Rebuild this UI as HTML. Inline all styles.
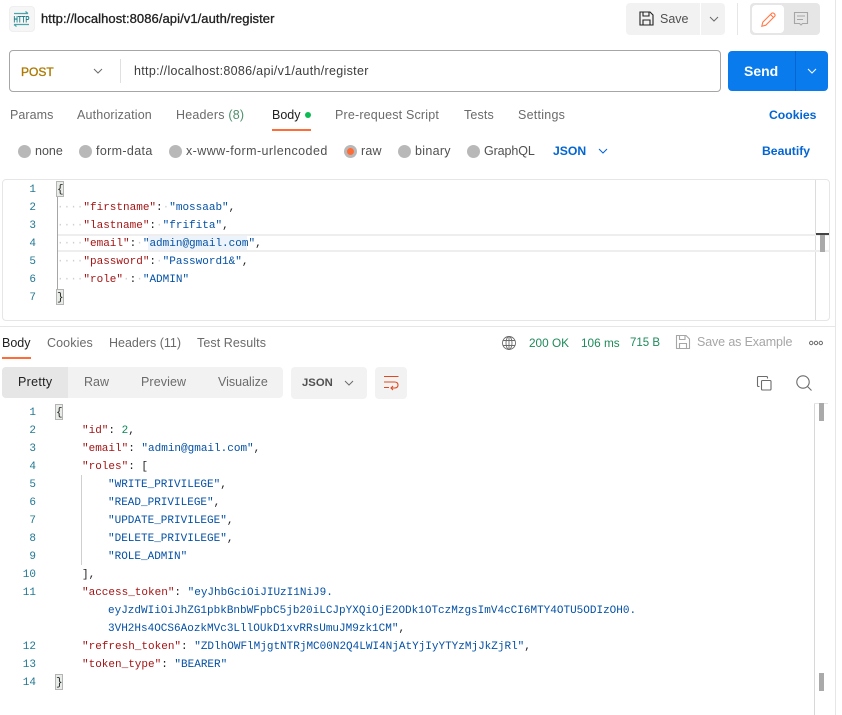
<!DOCTYPE html>
<html><head><meta charset="utf-8"><style>
html,body{margin:0;padding:0;background:#fff}
body{width:842px;height:715px;position:relative;overflow:hidden;font-family:"Liberation Sans",sans-serif;font-size:12.5px;color:#6b6b6b}
.a{position:absolute;white-space:pre}
.t{position:absolute;white-space:pre;line-height:16px;height:16px}
.c{position:absolute;white-space:pre;font-family:"Liberation Mono",monospace;font-size:11px;line-height:18px;height:18px;color:#212121;margin-top:1px}
.n{position:absolute;width:36px;text-align:right;left:0;font-family:"Liberation Mono",monospace;font-size:11px;line-height:18px;height:18px;color:#237893;margin-top:1px}
.k{color:#a31515}.s{color:#0451a5}.g{color:#098658}.d{color:#cfcfcf}
.r{position:absolute;width:13px;height:13px;border-radius:50%;background:#b8b8b8;top:145px}
.b{position:absolute;width:8px;height:16px;border:1px solid #b4b4b4;background:#e8ece6;box-sizing:border-box}
.blue{color:#0265d2;font-weight:bold}
.tab{letter-spacing:.15px}
svg{position:absolute;overflow:visible}
</style></head><body>

<div class="a" style="left:835px;top:0;width:1px;height:715px;background:#e6e6e6"></div>

<div class="a" style="left:9px;top:6px;width:26px;height:26px;background:#f6f6f6;border-radius:4px;box-sizing:border-box;border:1px solid #efefef"></div>
<svg style="left:13px;top:11px" width="18" height="16" viewBox="0 0 18 16"><path d="M1 2.5H15M12.5 .5L15 2.5M1 13.5H16M1 13.5L3.5 15.5" stroke="#4ba3ab" stroke-width="1.2" fill="none"/><text x="0.5" y="11.5" font-family="Liberation Sans" font-size="9" font-weight="bold" fill="#227f8c" textLength="16" lengthAdjust="spacingAndGlyphs">HTTP</text></svg>
<div class="t" style="left:41px;top:11px;color:#212121;font-size:13px;-webkit-text-stroke:.3px #212121;letter-spacing:.07px">http://localhost:8086/api/v1/auth/register</div>

<div class="a" style="left:626px;top:3px;width:74px;height:32px;background:#f2f2f2;border-radius:4px 0 0 4px"></div>
<div class="a" style="left:701px;top:3px;width:24px;height:32px;background:#f2f2f2;border-radius:0 4px 4px 0"></div>
<svg style="left:639px;top:11px" width="15" height="15" viewBox="0 0 15 15" fill="none" stroke="#212121" stroke-width="1.1"><path d="M1 1H11L14 4V14H1Z"/><path d="M4 1V5H10V1M4 14V9H11V14"/></svg>
<div class="t" style="left:660px;top:11px;color:#505050;font-size:12.5px">Save</div>
<svg style="left:709px;top:16px" width="10" height="6" viewBox="0 0 10 6" fill="none" stroke="#6b6b6b"><path d="M1 1L5 5L9 1"/></svg>
<div class="a" style="left:737px;top:3px;width:1px;height:32px;background:#e6e6e6"></div>
<div class="a" style="left:750px;top:3px;width:70px;height:32px;background:#e6e6e6;border-radius:4px"></div>
<div class="a" style="left:752px;top:5px;width:32px;height:28px;background:#fff;border-radius:4px"></div>
<svg style="left:761px;top:12px" width="15" height="15" viewBox="0 0 15 15" fill="none" stroke="#ff7c4d" stroke-width="1.1"><path d="M.8 14.2L1.8 10.2L10.8 1.2Q12 .4 13.3 1.7Q14.6 3 13.8 4.2L4.8 13.2ZM9.5 2.5L12.5 5.5"/></svg>
<svg style="left:794px;top:12px" width="14" height="15" viewBox="0 0 14 15" fill="none" stroke="#a6a6a6" stroke-width="1.1"><path d="M.5 .5H13.5V11.5H8.5L7 13L5.5 11.5H.5ZM3 4H11M3 7.5H9"/></svg>

<div class="a" style="left:9px;top:50px;width:712px;height:42px;border:1px solid #a6a6a6;border-radius:4px;box-sizing:border-box"></div>
<div class="t" style="left:21px;top:64px;color:#ad7a03;font-size:12px;-webkit-text-stroke:.35px #ad7a03">POST</div>
<svg style="left:93px;top:68px" width="10" height="6" viewBox="0 0 10 6" fill="none" stroke="#6b6b6b"><path d="M1 1L5 5L9 1"/></svg>
<div class="a" style="left:120px;top:59px;width:1px;height:24px;background:#e0e0e0"></div>
<div class="t" style="left:134px;top:63px;color:#3d3d3d;font-size:12.5px;letter-spacing:.31px">http://localhost:8086/api/v1/auth/register</div>
<div class="a" style="left:728px;top:51px;width:100px;height:40px;background:#097bed;border-radius:4px"></div>
<div class="a" style="left:795px;top:51px;width:1px;height:40px;background:#0265d2"></div>
<div class="t" style="left:744px;top:63px;color:#fff;font-weight:bold;font-size:14px">Send</div>
<svg style="left:807px;top:68px" width="10" height="6" viewBox="0 0 10 6" fill="none" stroke="#fff"><path d="M1 1L5 5L9 1"/></svg>

<div class="t tab" style="left:10px;top:107px;letter-spacing:.05px">Params</div>
<div class="t tab" style="left:77px;top:107px">Authorization</div>
<div class="t tab" style="left:176px;top:107px;letter-spacing:.2px">Headers <span style="color:#4d8f6a">(8)</span></div>
<div class="t" style="left:272px;top:107px;color:#212121">Body</div>
<div class="a" style="left:305px;top:112px;width:6px;height:6px;border-radius:50%;background:#0cbb52"></div>
<div class="a" style="left:272px;top:129px;width:39px;height:2px;background:#ff6c37"></div>
<div class="t tab" style="left:335px;top:107px;letter-spacing:.18px">Pre-request Script</div>
<div class="t tab" style="left:464px;top:107px">Tests</div>
<div class="t tab" style="left:518px;top:107px;letter-spacing:.25px">Settings</div>
<div class="t blue" style="left:769px;top:107px;font-size:12.2px">Cookies</div>

<div class="r" style="left:18px"></div><div class="t" style="left:35px;top:143px;color:#505050">none</div>
<div class="r" style="left:79px"></div><div class="t" style="left:96px;top:143px;color:#505050;letter-spacing:.35px">form-data</div>
<div class="r" style="left:169px"></div><div class="t" style="left:186px;top:143px;color:#505050;letter-spacing:.43px">x-www-form-urlencoded</div>
<div class="r" style="left:344px"></div><div class="a" style="left:347px;top:148px;width:7px;height:7px;border-radius:50%;background:#ff6c37"></div><div class="t" style="left:361px;top:143px;color:#505050;letter-spacing:.2px">raw</div>
<div class="r" style="left:398px"></div><div class="t" style="left:415px;top:143px;color:#505050;letter-spacing:.3px">binary</div>
<div class="r" style="left:467px"></div><div class="t" style="left:484px;top:143px;color:#505050;letter-spacing:-.1px">GraphQL</div>
<div class="t blue" style="left:553px;top:143px;font-size:12.2px">JSON</div>
<svg style="left:598px;top:148px" width="10" height="6" viewBox="0 0 10 6" fill="none" stroke="#0265d2"><path d="M1 1L5 5L9 1"/></svg>
<div class="t blue" style="left:762px;top:143px;font-size:12.2px">Beautify</div>

<div class="a" style="left:2px;top:179px;width:828px;height:142px;border:1px solid #e6e6e6;border-radius:4px;box-sizing:border-box"></div>
<div class="a" style="left:815px;top:180px;width:1px;height:140px;background:#dcdcdc"></div>
<div class="a" style="left:57px;top:234px;width:772px;height:18px;border-top:2px solid #eee;border-bottom:2px solid #eee;box-sizing:border-box"></div>
<div class="a" style="left:148px;top:236px;width:99px;height:14px;background:#edf3fa"></div>
<div class="a" style="left:57px;top:182px;width:1px;height:118px;background:#a6a6a6"></div>
<div class="b" style="left:56px;top:181px"></div>
<div class="b" style="left:56px;top:289px"></div>
<div class="a" style="left:816px;top:233px;width:13px;height:2px;background:#444"></div>
<div class="a" style="left:820px;top:235px;width:5px;height:17px;background:#aaa"></div>

<div class="n" style="top:180px">1</div><div class="c" style="left:57px;top:180px">{</div>
<div class="n" style="top:198px">2</div><div class="c" style="left:57px;top:198px"><span class="d">····</span><span class="k">"firstname"</span>:<span class="d">·</span><span class="s">"mossaab"</span>,</div>
<div class="n" style="top:216px">3</div><div class="c" style="left:57px;top:216px"><span class="d">····</span><span class="k">"lastname"</span>:<span class="d">·</span><span class="s">"frifita"</span>,</div>
<div class="n" style="top:234px">4</div><div class="c" style="left:57px;top:234px"><span class="d">····</span><span class="k">"email"</span>:<span class="d">·</span><span class="s">"admin@gmail.com"</span>,</div>
<div class="n" style="top:252px">5</div><div class="c" style="left:57px;top:252px"><span class="d">····</span><span class="k">"password"</span>:<span class="d">·</span><span class="s">"Password1&amp;"</span>,</div>
<div class="n" style="top:270px">6</div><div class="c" style="left:57px;top:270px"><span class="d">····</span><span class="k">"role"</span><span class="d">·</span>:<span class="d">·</span><span class="s">"ADMIN"</span></div>
<div class="n" style="top:288px">7</div><div class="c" style="left:57px;top:288px">}</div>

<div class="a" style="left:0;top:326px;width:835px;height:1px;background:#e6e6e6"></div>
<div class="t" style="left:2px;top:335px;color:#212121">Body</div>
<div class="a" style="left:2px;top:357px;width:29px;height:2px;background:#ff6c37"></div>
<div class="t" style="left:47px;top:335px;letter-spacing:.1px">Cookies</div>
<div class="t" style="left:109px;top:335px">Headers <span style="color:#6b6b6b">(11)</span></div>
<div class="t" style="left:197px;top:335px;letter-spacing:.08px">Test Results</div>

<svg style="left:502px;top:336px" width="14" height="14" viewBox="0 0 14 14" fill="none" stroke="#6b6b6b" stroke-width=".9"><circle cx="7" cy="7" r="6.5"/><ellipse cx="7" cy="7" rx="3" ry="6.5"/><path d="M1 4.5H13M1 9.5H13M7 .5V13.5"/></svg>
<div class="t" style="left:529px;top:335px;color:#1f8a5a;font-size:11.8px">200 OK</div>
<div class="t" style="left:581px;top:335px;color:#1f8a5a;font-size:11.8px">106 ms</div>
<div class="t" style="left:630px;top:335px;color:#1f8a5a;font-size:11.5px">715 B</div>
<svg style="left:676px;top:335px" width="14" height="14" viewBox="0 0 14 14" fill="none" stroke="#a6a6a6" stroke-width="1.1"><path d="M.5 .5H10L13.5 4V13.5H.5Z"/><path d="M3.5 .5V4.5H9V.5M3.5 13.5V8.5H10.5V13.5"/></svg>
<div class="t" style="left:697px;top:334px;color:#a6a6a6;letter-spacing:-.13px">Save as Example</div>
<svg style="left:809px;top:340px" width="14" height="6" viewBox="0 0 14 6" fill="none" stroke="#6b6b6b"><circle cx="2.2" cy="3" r="1.7"/><circle cx="7" cy="3" r="1.7"/><circle cx="11.8" cy="3" r="1.7"/></svg>

<div class="a" style="left:2px;top:367px;width:281px;height:31px;background:#f2f2f2;border-radius:4px"></div>
<div class="a" style="left:2px;top:367px;width:66px;height:31px;background:#e6e6e6;border-radius:4px 0 0 4px"></div>
<div class="t" style="left:18px;top:374px;color:#212121;letter-spacing:.3px">Pretty</div>
<div class="t" style="left:84px;top:374px">Raw</div>
<div class="t" style="left:141px;top:374px;letter-spacing:.1px">Preview</div>
<div class="t" style="left:218px;top:374px">Visualize</div>
<div class="a" style="left:291px;top:367px;width:76px;height:32px;background:#f2f2f2;border-radius:4px"></div>
<div class="t" style="left:302px;top:375px;color:#505050;font-weight:bold;font-size:11.3px">JSON</div>
<svg style="left:344px;top:380px" width="10" height="6" viewBox="0 0 10 6" fill="none" stroke="#6b6b6b"><path d="M1 1L5 5L9 1"/></svg>
<div class="a" style="left:375px;top:367px;width:32px;height:32px;background:#f2f2f2;border-radius:4px"></div>
<svg style="left:384px;top:376px" width="15" height="14" viewBox="0 0 15 14" fill="none" stroke="#e0491f" stroke-width="1.1"><path d="M0 .5H14.5M0 6H10.5Q14 6 14 9T10.5 12H7M9 10L7 12L9 14M0 11.5H5"/></svg>
<svg style="left:757px;top:376px" width="15" height="15" viewBox="0 0 15 15" fill="none" stroke="#6b6b6b" stroke-width="1.1"><rect x="4.5" y="4.5" width="9.5" height="9.5" rx="1"/><path d="M2.5 10.5H1.5Q.5 10.5 .5 9.5V1.5Q.5 .5 1.5 .5H9.5Q10.5 .5 10.5 1.5V2.5"/></svg>
<svg style="left:796px;top:375px" width="16" height="16" viewBox="0 0 16 16" fill="none" stroke="#6b6b6b" stroke-width="1.1"><circle cx="7" cy="7" r="6.2"/><path d="M11.5 11.5L15.5 15.5"/></svg>

<div class="a" style="left:814px;top:403px;width:1px;height:312px;background:#d8d8d8"></div>
<div class="a" style="left:814px;top:403px;width:14px;height:1px;background:#e6e6e6"></div>
<div class="a" style="left:819px;top:403px;width:5px;height:18px;background:#aaa"></div>
<div class="a" style="left:819px;top:673px;width:5px;height:18px;background:#aaa"></div>

<div class="b" style="left:55px;top:404px"></div>
<div class="b" style="left:55px;top:674px"></div>
<div class="a" style="left:81px;top:475px;width:1px;height:90px;background:#cfcfcf"></div>

<div class="n" style="top:403px">1</div><div class="c" style="left:56px;top:403px">{</div>
<div class="n" style="top:421px">2</div><div class="c" style="left:82px;top:421px"><span class="k">"id"</span>: <span class="g">2</span>,</div>
<div class="n" style="top:439px">3</div><div class="c" style="left:82px;top:439px"><span class="k">"email"</span>: <span class="s">"admin@gmail.com"</span>,</div>
<div class="n" style="top:457px">4</div><div class="c" style="left:82px;top:457px"><span class="k">"roles"</span>: [</div>
<div class="n" style="top:475px">5</div><div class="c s" style="left:108px;top:475px">"WRITE_PRIVILEGE"<span style="color:#212121">,</span></div>
<div class="n" style="top:493px">6</div><div class="c s" style="left:108px;top:493px">"READ_PRIVILEGE"<span style="color:#212121">,</span></div>
<div class="n" style="top:511px">7</div><div class="c s" style="left:108px;top:511px">"UPDATE_PRIVILEGE"<span style="color:#212121">,</span></div>
<div class="n" style="top:529px">8</div><div class="c s" style="left:108px;top:529px">"DELETE_PRIVILEGE"<span style="color:#212121">,</span></div>
<div class="n" style="top:547px">9</div><div class="c s" style="left:108px;top:547px">"ROLE_ADMIN"</div>
<div class="n" style="top:565px">10</div><div class="c" style="left:82px;top:565px">],</div>
<div class="n" style="top:583px">11</div><div class="c" style="left:82px;top:583px"><span class="k">"access_token"</span>: <span class="s">"eyJhbGciOiJIUzI1NiJ9.</span></div>
<div class="c s" style="left:108px;top:601px">eyJzdWIiOiJhZG1pbkBnbWFpbC5jb20iLCJpYXQiOjE2ODk1OTczMzgsImV4cCI6MTY4OTU5ODIzOH0.</div>
<div class="c s" style="left:108px;top:619px">3VH2Hs4OCS6AozkMVc3LllOUkD1xvRRsUmuJM9zk1CM"<span style="color:#212121">,</span></div>
<div class="n" style="top:637px">12</div><div class="c" style="left:82px;top:637px"><span class="k">"refresh_token"</span>: <span class="s">"ZDlhOWFlMjgtNTRjMC00N2Q4LWI4NjAtYjIyYTYzMjJkZjRl"</span>,</div>
<div class="n" style="top:655px">13</div><div class="c" style="left:82px;top:655px"><span class="k">"token_type"</span>: <span class="s">"BEARER"</span></div>
<div class="n" style="top:673px">14</div><div class="c" style="left:56px;top:673px">}</div>

</body></html>
